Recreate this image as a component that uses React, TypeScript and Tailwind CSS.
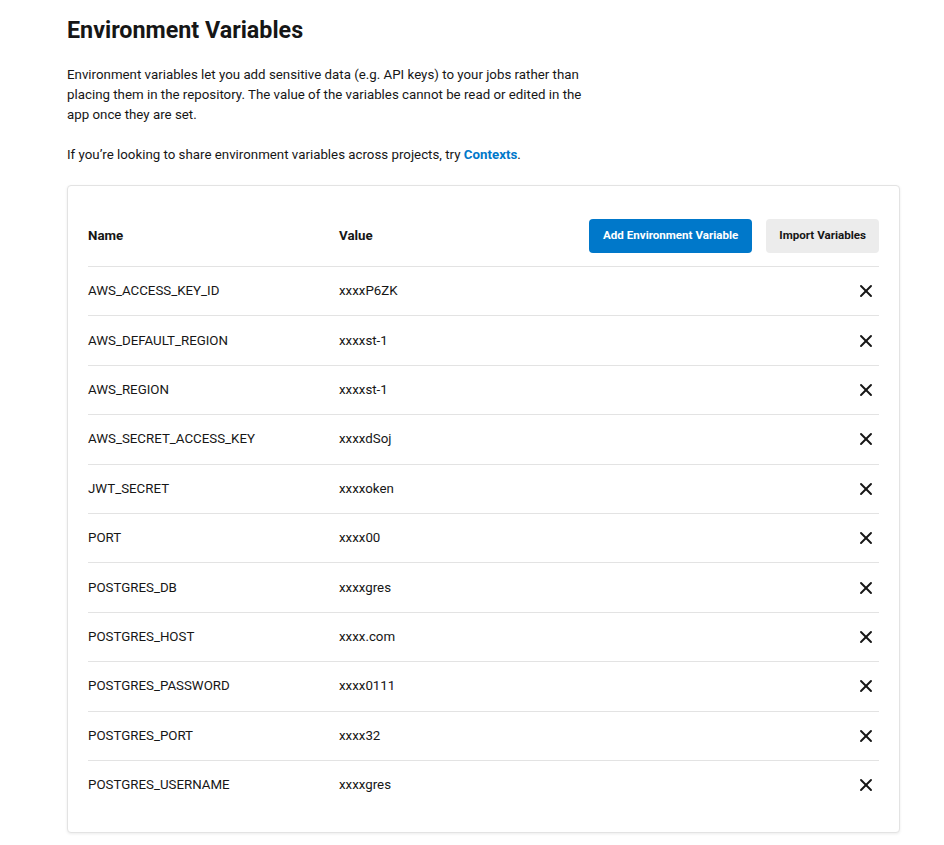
import { X } from 'lucide-react'

const variables = [
  { name: 'AWS_ACCESS_KEY_ID', value: 'xxxxP6ZK' },
  { name: 'AWS_DEFAULT_REGION', value: 'xxxxst-1' },
  { name: 'AWS_REGION', value: 'xxxxst-1' },
  { name: 'AWS_SECRET_ACCESS_KEY', value: 'xxxxdSoj' },
  { name: 'JWT_SECRET', value: 'xxxxoken' },
  { name: 'PORT', value: 'xxxx00' },
  { name: 'POSTGRES_DB', value: 'xxxxgres' },
  { name: 'POSTGRES_HOST', value: 'xxxx.com' },
  { name: 'POSTGRES_PASSWORD', value: 'xxxx0111' },
  { name: 'POSTGRES_PORT', value: 'xxxx32' },
  { name: 'POSTGRES_USERNAME', value: 'xxxxgres' }
]

const App = () => {
  return (
    <div className="min-h-[845px] bg-white pl-[67px] pt-4 pb-[13px] font-['Roboto',sans-serif] text-[#161616]">
      <h1 className="text-[23.3px] leading-[28px] font-bold mb-[21px]">Environment Variables</h1>

      <p className="text-[13.3px] leading-5 w-[535px] mb-5">
        Environment variables let you add sensitive data (e.g. API keys) to your jobs rather than placing them in
        the repository. The value of the variables cannot be read or edited in the app once they are set.
      </p>
      <p className="text-[13.3px] leading-5 mb-5">
        If you’re looking to share environment variables across projects, try{' '}
        <a href="#" className="font-bold text-[#0078ca]">
          Contexts
        </a>
        .
      </p>

      <div className="w-[833px] rounded border border-[#e3e3e3] bg-white shadow-[0_1px_3px_rgba(0,0,0,0.08)] px-5 pt-[33px] pb-[23px]">
        <div className="flex items-center h-[34px] mb-[13px] text-[13.3px] font-bold">
          <div className="w-[251px]">Name</div>
          <div className="flex-1">Value</div>
          <button className="h-[34px] px-[14px] rounded bg-[#0078ca] text-white text-[11.6px] font-bold">
            Add Environment Variable
          </button>
          <button className="ml-[14px] h-[34px] px-[13px] rounded bg-[#ececec] text-[#161616] text-[11.6px] font-bold">
            Import Variables
          </button>
        </div>

        {variables.map((v) => (
          <div
            key={v.name}
            className="flex items-center h-[49.4px] border-t border-[#e3e3e3] text-[13.3px]"
          >
            <div className="w-[251px]">{v.name}</div>
            <div className="flex-1">{v.value}</div>
            <button className="flex items-center justify-center w-5 h-5 mr-[3px]">
              <X size={20} strokeWidth={2.3} className="text-[#161616]" />
            </button>
          </div>
        ))}
      </div>
    </div>
  )
}

export default App
